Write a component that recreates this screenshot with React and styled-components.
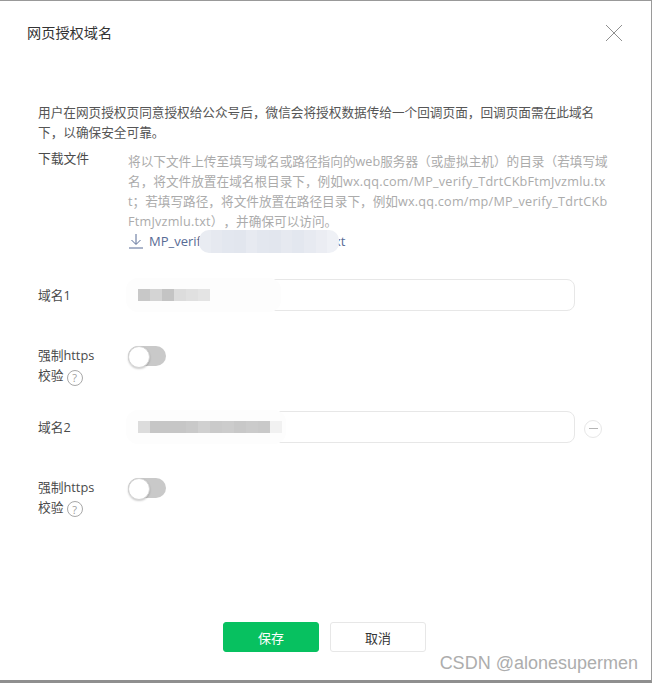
import React from "react";
import styled, { createGlobalStyle } from "styled-components";

const Global = createGlobalStyle`
  html, body { margin: 0; padding: 0; background: #fff; }
  * { box-sizing: border-box; }
`;

const FONT = `"Open Sans", "Noto Sans CJK SC", sans-serif`;

const Frame = styled.div`
  position: relative;
  width: 652px;
  height: 683px;
  overflow: hidden;
  background: #fff;
  border-top: 1px solid #999;
  border-right: 1px solid #9a9a9a;
  border-bottom: 3px solid #8f8f8f;
  font-family: ${FONT};
  color: #353535;
  display: flex;
  flex-direction: column;
`;
const Header = styled.header`
  height: 64px;
  padding: 0 28px 0 27px;
  display: flex;
  align-items: center;
  justify-content: space-between;
`;
const Title = styled.h1`
  margin: 0;
  font-size: 14.2px;
  font-weight: 400;
  line-height: 20px;
  color: #333;
`;
const CloseIcon = styled.svg`
  width: 18px;
  height: 18px;
  display: block;
`;
const Body = styled.main`
  flex: 1;
  padding: 37px 44px 0 38px;
`;
const Intro = styled.p`
  margin: 0 0 6px;
  font-size: 12.65px;
  line-height: 20px;
  color: #555;
`;
const Row = styled.div`
  display: flex;
  align-items: ${p => p.$align || "flex-start"};
  margin-top: ${p => p.$mt || 0}px;
`;
const Label = styled.div`
  width: 90px;
  flex: none;
  padding-top: ${p => p.$pt || 0}px;
  font-size: 12.75px;
  line-height: 20px;
  color: #4a4a4a;
`;
const Hint = styled.div`
  width: 482px;
  margin-top: 3px;
  font-size: 12.65px;
  line-height: 20px;
  color: #ababab;
  white-space: nowrap;
  text-spacing-trim: space-all;
`;
const Latin = styled.span`
  letter-spacing: 0.22px;
`;
const FileLink = styled.a`
  position: relative;
  display: flex;
  align-items: center;
  gap: 5px;
  color: #576b95;
  font-size: 13px;
  width: 220px;
`;
const Blur = styled.span`
  position: absolute;
  left: 71px;
  top: -1px;
  width: 140px;
  height: 23px;
  border-radius: 10px;
  overflow: hidden;
  display: flex;
`;
const BlurCell = styled.span`
  flex: 1;
  background: ${p => p.$c};
`;
const TrailingText = styled.span`
  position: absolute;
  left: 206px;
  top: 0;
`;
const InputBox = styled.div`
  position: relative;
  width: 447px;
  height: 32px;
  border: 1px solid #e7e7e7;
  border-radius: 8px;
  background: #fff;
  flex: none;
`;
const Patch = styled.div`
  position: absolute;
  left: -3px;
  top: -2px;
  bottom: -2px;
  width: ${p => p.$w}px;
  background: #fdfdfd;
  border-radius: 12px;
  display: flex;
  align-items: center;
  padding: 0 0 0 12px;
`;
const Cell = styled.span`
  display: block;
  width: 12px;
  height: 12px;
  flex: none;
  background: ${p => p.$c};
`;
const RemoveBtn = styled.span`
  width: 18px;
  height: 18px;
  margin: 9px 0 0 9px;
  flex: none;
  border: 1px solid #e7e7e7;
  border-radius: 50%;
  display: flex;
  align-items: center;
  justify-content: center;
  &::before {
    content: "";
    width: 9px;
    height: 1px;
    background: #b5b5b5;
  }
`;
const Toggle = styled.span`
  display: block;
  position: relative;
  width: 38px;
  height: 20px;
  margin-top: 1px;
  border-radius: 10px;
  background: #c9c9c9;
  &::after {
    content: "";
    position: absolute;
    left: 0;
    top: 0;
    width: 20px;
    height: 20px;
    border-radius: 50%;
    background: #fff;
    border: 1px solid #d4d4d4;
    box-shadow: 0 1px 2px rgba(0, 0, 0, 0.2);
  }
`;
const HelpIcon = styled.span`
  display: inline-flex;
  align-items: center;
  justify-content: center;
  width: 16px;
  height: 16px;
  margin-left: 3px;
  border: 1px solid #a8a8a8;
  border-radius: 50%;
  font-size: 11px;
  line-height: 1;
  color: #a0a0a0;
  vertical-align: -2px;
`;
const Footer = styled.footer`
  height: 58px;
  padding-left: 223px;
  display: flex;
  gap: 11px;
`;
const Button = styled.button`
  width: 96px;
  height: 30px;
  padding: 0;
  border-radius: 3px;
  border: 1px solid ${p => (p.$primary ? "#07c160" : "#e7e7e7")};
  background: ${p => (p.$primary ? "#07c160" : "#fff")};
  color: ${p => (p.$primary ? "#fff" : "#353535")};
  font-family: ${FONT};
  font-size: 13px;
`;
const Watermark = styled.div`
  position: absolute;
  right: 13px;
  bottom: 7px;
  font-family: "Liberation Sans", sans-serif;
  font-size: 18px;
  line-height: 20px;
  color: #adadad;
`;

const cells1 = ["#c8c8c8", "#d4d4d4", "#c4c4c4", "#dcdcdc", "#e0e0e0", "#e4e4e4"];
const cells2 = ["#dcdcdc", "#c6c6c6", "#c6c6c6", "#c6c6c6", "#c9c9c9", "#d0d0d0", "#cacaca", "#cccccc", "#c8c8c8", "#cbcbcb", "#c9c9c9", "#f1f1f1"];
const linkCells = ["#e9ecf2", "#e6e9f0", "#e3e7ef", "#e2e6ee", "#e7eaf1", "#e3e7ef", "#e2e6ee", "#e6e9f0", "#e3e7ef", "#e7eaf1", "#ebedf3", "#eff1f6"];

const Force = ({ mt }) => (
  <Row $mt={mt}>
    <Label>
      强制https
      <br />
      校验<HelpIcon>?</HelpIcon>
    </Label>
    <Toggle />
  </Row>
);

export default function App() {
  return (
    <Frame>
      <Global />
      <Header>
        <Title>网页授权域名</Title>
        <CloseIcon viewBox="0 0 18 18">
          <path d="M1 1 L17 17 M17 1 L1 17" stroke="#8f8f8f" strokeWidth="1" fill="none" />
        </CloseIcon>
      </Header>
      <Body>
        <Intro>
          用户在网页授权页同意授权给公众号后，微信会将授权数据传给一个回调页面，回调页面需在此域名
          <br />
          下，以确保安全可靠。
        </Intro>
        <Row>
          <Label>下载文件</Label>
          <Hint>
            将以下文件上传至填写域名或路径指向的web服务器（或虚拟主机）的目录（若填写域
            <br />
            名，将文件放置在域名根目录下，例如<Latin>wx.qq.com/MP_verify_TdrtCKbFtmJvzmlu.tx</Latin>
            <br />
            t；若填写路径，将文件放置在路径目录下，例如<Latin>wx.qq.com/mp/MP_verify_TdrtCKb</Latin>
            <br />
            <Latin>FtmJvzmlu.txt</Latin>），并确保可以访问。
            <FileLink>
              <svg width="16" height="16" viewBox="0 0 16 16" fill="none" stroke="#576b95">
                <path d="M8 1 V11 M3.5 7 L8 11.5 L12.5 7 M1 15 H15" />
              </svg>
              MP_verif
              <TrailingText>xt</TrailingText>
              <Blur>
                {linkCells.map((c, i) => <BlurCell key={i} $c={c} />)}
              </Blur>
            </FileLink>
          </Hint>
        </Row>
        <Row $mt={28} $align="center">
          <Label>域名1</Label>
          <InputBox>
            <Patch $w={155}>
              {cells1.map((c, i) => <Cell key={i} $c={c} />)}
            </Patch>
          </InputBox>
        </Row>
        <Force mt={34} />
        <Row $mt={25}>
          <Label $pt={6}>域名2</Label>
          <InputBox>
            <Patch $w={160}>
              {cells2.map((c, i) => <Cell key={i} $c={c} />)}
            </Patch>
          </InputBox>
          <RemoveBtn />
        </Row>
        <Force mt={34} />
      </Body>
      <Footer>
        <Button $primary>保存</Button>
        <Button>取消</Button>
      </Footer>
      <Watermark>CSDN @alonesupermen</Watermark>
    </Frame>
  );
}
